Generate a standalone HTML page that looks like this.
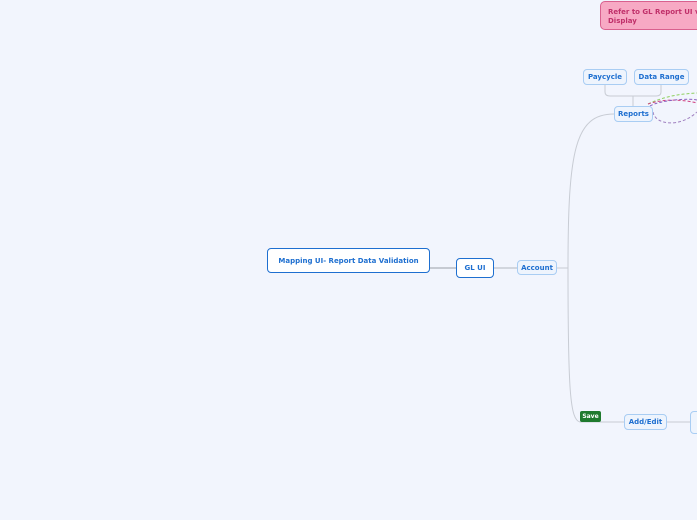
<!DOCTYPE html>
<html><head><style>
body{margin:0;width:697px;height:520px;background:#f2f5fd;position:relative;overflow:hidden;font-family:"DejaVu Sans","Liberation Sans",sans-serif;font-weight:bold;}
.n{position:absolute;box-sizing:border-box;color:#1e6fd0;font-size:7px;display:flex;align-items:center;justify-content:center;white-space:nowrap;}
.s{background:#eef4fd;border:1.5px solid #a9cdf3;border-radius:4px;}
.m{background:#fff;border:1.5px solid #1e6fd0;border-radius:4px;}
</style></head><body>
<svg width="697" height="520" style="position:absolute;left:0;top:0" fill="none">
<path d="M430 268 H456" stroke="#b8bcc4" stroke-width="1.5"/>
<path d="M494 268 H517" stroke="#c8ccd4" stroke-width="1.5"/>
<path d="M557 268 H568" stroke="#c8ccd4"/>
<path d="M614 114 C575 114 568 150 568 268 C568 390 570 420 580 422 H624" stroke="#c8ccd4"/>
<path d="M605 84 V92 Q605 96 610 96 H656 Q661 96 661 92 V84 M633 96 V107" stroke="#c8ccd4"/>
<path d="M667 422 H690" stroke="#c8ccd4"/>
<path d="M648 104 C665 96 680 94 697 93" stroke="#8fcf5f" stroke-dasharray="3 2"/>
<path d="M648 104 C665 98 685 100 697 103" stroke="#d04080" stroke-dasharray="3 2"/>
<path d="M650 106 C660 100 690 98 697 100" stroke="#8a5fc0" stroke-dasharray="3 2"/>
<path d="M653 112 C655 125 680 128 697 112" stroke="#a080c0" stroke-dasharray="3 2"/>
</svg>
<div class="n" style="left:600px;top:1px;width:110px;height:29px;background:#f7a9c4;border:1px solid #d9608e;border-radius:5px;color:#c0306a;justify-content:flex-start;align-items:flex-start;padding:6px 7px;font-size:7px;line-height:9px;white-space:normal">Refer to GL Report UI v Display</div>
<div class="n s" style="left:583px;top:69px;width:44px;height:16px">Paycycle</div>
<div class="n s" style="left:634px;top:69px;width:55px;height:16px">Data Range</div>
<div class="n s" style="left:614px;top:106px;width:39px;height:16px">Reports</div>
<div class="n m" style="left:267px;top:248px;width:163px;height:25px">Mapping UI- Report Data Validation</div>
<div class="n m" style="left:456px;top:258px;width:38px;height:20px">GL UI</div>
<div class="n s" style="left:517px;top:260px;width:40px;height:15px">Account</div>
<div class="n" style="left:580px;top:411px;width:21px;height:11px;background:#1f7a2e;border-radius:2px;color:#fff;font-size:6px">Save</div>
<div class="n s" style="left:624px;top:414px;width:43px;height:16px">Add/Edit</div>
<div class="n s" style="left:690px;top:411px;width:20px;height:23px"></div>
</body></html>
